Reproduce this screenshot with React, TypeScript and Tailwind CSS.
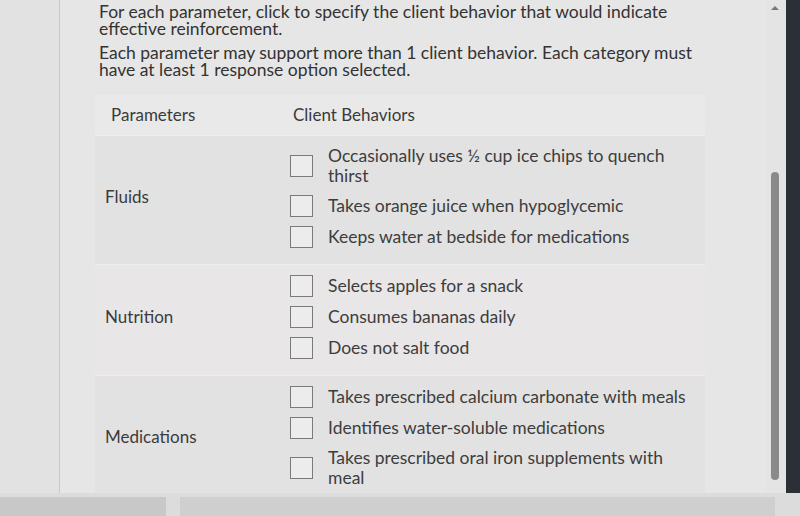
import { useState } from "react";

type Row = { label: string; items: string[] };

const rows: Row[] = [
  {
    label: "Fluids",
    items: [
      "Occasionally uses ½ cup ice chips to quench thirst",
      "Takes orange juice when hypoglycemic",
      "Keeps water at bedside for medications",
    ],
  },
  {
    label: "Nutrition",
    items: ["Selects apples for a snack", "Consumes bananas daily", "Does not salt food"],
  },
  {
    label: "Medications",
    items: [
      "Takes prescribed calcium carbonate with meals",
      "Identifies water-soluble medications",
      "Takes prescribed oral iron supplements with meal",
    ],
  },
];

export default function App() {
  const [checked, setChecked] = useState<Record<string, boolean>>({});

  const toggle = (key: string) => setChecked((c) => ({ ...c, [key]: !c[key] }));

  return (
    <div
      className="flex h-[516px] w-[800px] flex-col overflow-hidden bg-[#e3e3e3] text-[#3b3b3b]"
      style={{ fontFamily: "Lato, 'Open Sans', sans-serif" }}
    >
      <div className="flex h-[493px]">
        <div className="w-[60px] shrink-0 border-r border-[#c9c9c9] bg-[#e2e2e2]" />
        <div className="flex-1 bg-[#e6e6e6] pl-[39px] pr-[60px] pt-[3px]">
          <div className="w-[600px] text-[17.5px] leading-[17px] text-[#333]">
            <p>For each parameter, click to specify the client behavior that would indicate effective reinforcement.</p>
            <p className="mt-[7px]">
              Each parameter may support more than 1 client behavior. Each category must have at least 1 response
              option selected.
            </p>
          </div>

          <div className="ml-[-4px] mt-[17px] w-[610px] text-[17.5px]">
            <div className="flex h-[40px] items-center bg-[#e9e9e9]">
              <div className="w-[198px] pl-[16px] text-[17px]">Parameters</div>
              <div className="text-[17px]">Client Behaviors</div>
            </div>
            {rows.map((row, ri) => (
              <div
                key={row.label}
                className={`flex items-center border-t border-[#eeeeee] pb-[16px] pt-[10px] ${
                  ri === 1 ? "bg-[#e8e6e7]" : "bg-[#e2e2e2]"
                }`}
              >
                <div className="w-[195px] pl-[10px] text-[17px]">{row.label}</div>
                <div className="flex flex-1 flex-col gap-[9px]">
                  {row.items.map((item) => {
                    const key = row.label + item;
                    return (
                      <label key={item} className="flex cursor-pointer items-center gap-[15px]">
                        <span
                          onClick={() => toggle(key)}
                          className={`flex h-[22px] w-[23px] shrink-0 items-center justify-center border-[1.5px] border-[#7a7a7a] ${
                            checked[key] ? "bg-[#555]" : "bg-[#ececec]"
                          }`}
                        />
                        <span className="w-[368px] leading-[20px] text-[#3d3d3d]">{item}</span>
                      </label>
                    );
                  })}
                </div>
              </div>
            ))}
          </div>
        </div>
        <div className="relative w-[20px] shrink-0 bg-[#e4e4e4]">
          <div className="absolute left-[5px] top-[6px] h-0 w-0 border-x-[4px] border-b-[4px] border-x-transparent border-b-[#777]" />
          <div className="absolute left-[5px] top-[172px] h-[308px] w-[8px] rounded-full bg-[#8a8a8a]" />
        </div>
        <div className="w-[14px] shrink-0 bg-[#2b3036]" />
      </div>
      <div className="flex flex-1 gap-[14px] bg-[#dcdcdc] pt-[4px]">
        <div className="w-[166px] bg-[#c8c8c8]" />
        <div className="w-[595px] bg-[#cfcfcf]" />
      </div>
    </div>
  );
}
